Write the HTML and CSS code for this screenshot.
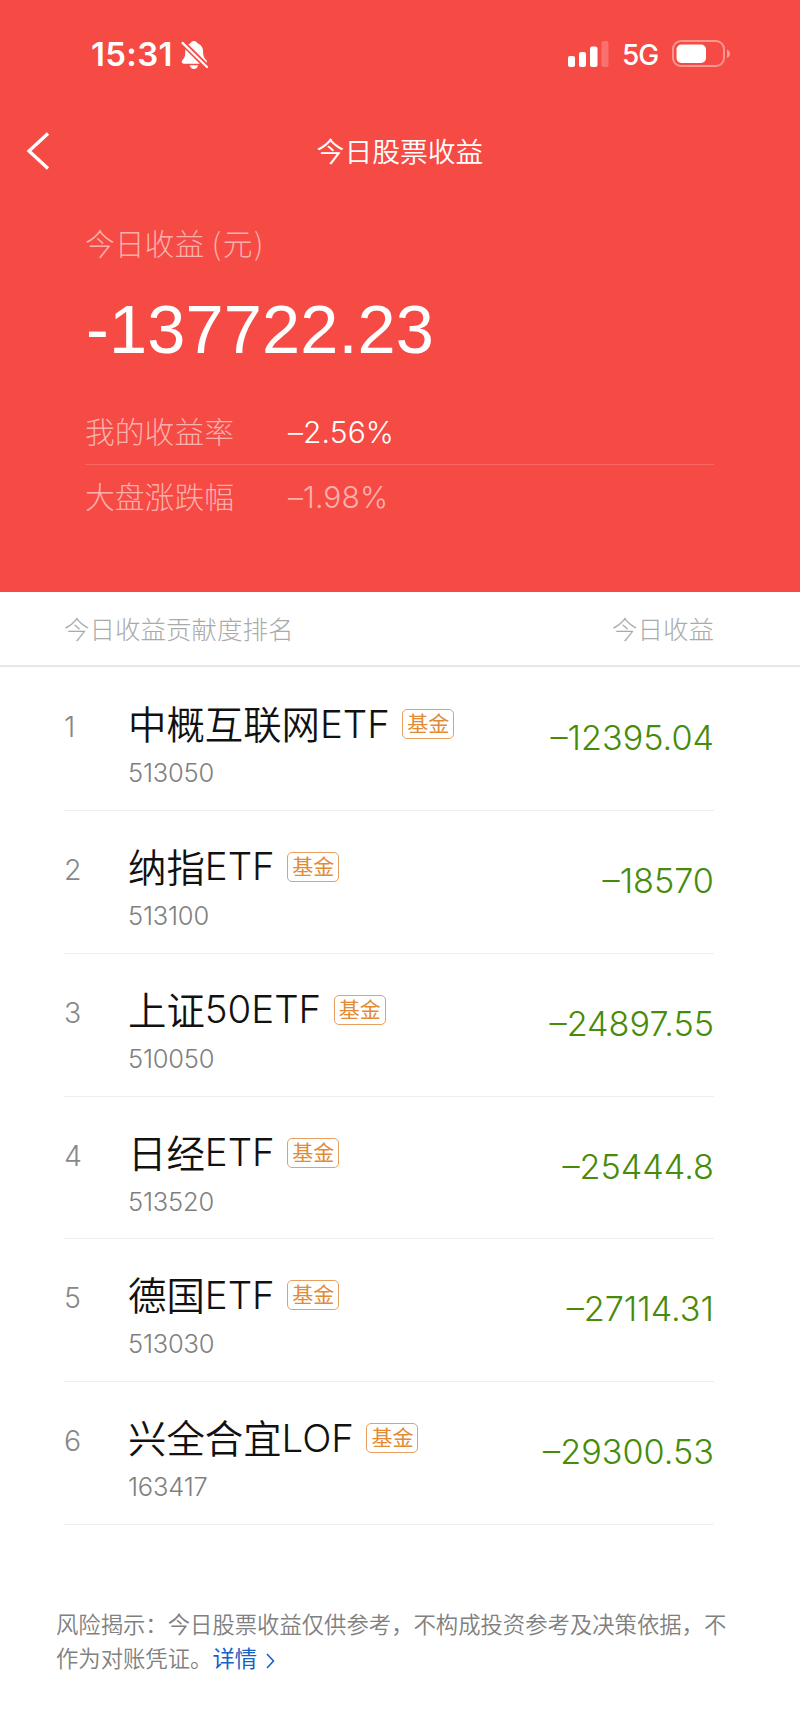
FILE: index.html
```html
<!DOCTYPE html>
<html lang="zh-CN">
<head>
<meta charset="utf-8">
<title>今日股票收益</title>
<link rel="stylesheet" href="styles.css">
</head>
<body>
<header class="hero">
  <div class="status">
    <span class="time">15:31</span>
    <svg class="bell" width="28" height="30" viewBox="0 0 28 30">
      <path fill="#fff" d="M13 1c1.900 0 3.100 1 3.500 2.300 3.600 1.300 5.600 4.300 5.600 8.200 0 4.500 1.100 6.400 3.500 9.100.8 1.300.1 3.100-1.700 3.100H2.700c-1.800 0-2.500-1.800-1.600-3.100 2.400-2.700 3.200-4.600 3.200-9.100 0-3.900 1.700-6.900 5.200-8.200C9.900 2 11.100 1 13 1zM8.700 25.200h8.400c-.5 2.300-2 3.700-4.200 3.700s-3.700-1.400-4.200-3.700z"/>
      <path stroke="#f64a44" stroke-width="5.600" d="M0 1l27 27"/>
      <path stroke="#fff" stroke-width="2.200" stroke-linecap="round" d="M1.500 2.900L26 27"/>
    </svg>
    <svg class="signal" width="41" height="26" viewBox="0 0 41 26" fill="#fff">
      <rect x="0" y="15" width="7" height="11" rx="2"/>
      <rect x="11" y="11" width="7" height="15" rx="2"/>
      <rect x="22" y="5.500" width="7.500" height="20.500" rx="2"/>
      <rect x="33.500" y="0" width="7" height="26" rx="2" opacity=".22"/>
    </svg>
    <span class="net">5G</span>
    <svg class="battery" width="60" height="28" viewBox="0 0 60 28">
      <rect x="1" y="1" width="51" height="25" rx="8" fill="none" stroke="#fff" stroke-width="2" opacity=".42"/>
      <rect x="4.500" y="4.500" width="29.500" height="18.500" rx="5" fill="#fff"/>
      <path d="M55 9.500c4 1.500 4 7 0 8.500z" fill="#fff" opacity=".45"/>
    </svg>
  </div>
  <nav class="nav">
    <svg class="back" width="24" height="38" viewBox="0 0 24 38"><path d="M22 1.500L3 19l19 17.500" fill="none" stroke="#fff" stroke-width="3.300"/></svg>
    <h1 class="title">今日股票收益</h1>
  </nav>
  <div class="label">今日收益 <span class="unit">(元)</span></div>
  <div class="total">-137722.23</div>
  <div class="rates">
    <div class="rate"><span class="label">我的收益率</span><span class="pct mine">–2.56%</span></div>
    <div class="rate"><span class="label">大盘涨跌幅</span><span class="pct">–1.98%</span></div>
  </div>
</header>
<main>
  <div class="thead"><span>今日收益贡献度排名</span><span>今日收益</span></div>
  <ul class="list">
    <li class="row"><span class="rank">1</span><div class="fund"><div class="name"><span class="cjk">中概互联网</span><span class="latin">ETF</span><span class="tag">基金</span></div><div class="code">513050</div></div><span class="value">–12395.04</span></li>
    <li class="row"><span class="rank">2</span><div class="fund"><div class="name"><span class="cjk">纳指</span><span class="latin">ETF</span><span class="tag">基金</span></div><div class="code">513100</div></div><span class="value">–18570</span></li>
    <li class="row"><span class="rank">3</span><div class="fund"><div class="name"><span class="cjk">上证</span><span class="latin">50ETF</span><span class="tag">基金</span></div><div class="code">510050</div></div><span class="value">–24897.55</span></li>
    <li class="row"><span class="rank">4</span><div class="fund"><div class="name"><span class="cjk">日经</span><span class="latin">ETF</span><span class="tag">基金</span></div><div class="code">513520</div></div><span class="value">–25444.8</span></li>
    <li class="row"><span class="rank">5</span><div class="fund"><div class="name"><span class="cjk">德国</span><span class="latin">ETF</span><span class="tag">基金</span></div><div class="code">513030</div></div><span class="value">–27114.31</span></li>
    <li class="row"><span class="rank">6</span><div class="fund"><div class="name"><span class="cjk">兴全合宜</span><span class="latin">LOF</span><span class="tag">基金</span></div><div class="code">163417</div></div><span class="value">–29300.53</span></li>
  </ul>
  <p class="risk">风险揭示：今日股票收益仅供参考，不构成投资参考及决策依据，不<br>作为对账凭证。<a class="more">详情<svg class="chev" width="9" height="16" viewBox="0 0 9 16"><path d="M1 1l6.500 7L1 15" fill="none" stroke="#1a5fc4" stroke-width="1.600"/></svg></a></p>
</main>
</body>
</html>
```

FILE: styles.css
```css
* { box-sizing: border-box; margin: 0; padding: 0; }
body {
  width: 800px;
  height: 1734px;
  background: #fff;
  font-family: Inter, "Noto Sans CJK SC", sans-serif;
  font-weight: 300;
  overflow: hidden;
}
.hero { height: 592px; background: #f64a44; color: #fff; }
.status { display: flex; height: 106px; padding: 34px 0 0 91px; align-items: flex-start; }
.time { width: 89px; font-size: 33px; line-height: 41px; font-weight: 600; letter-spacing: 0.300px; white-space: nowrap; }
.bell { margin: 6px 0 0 1px; }
.signal { margin: 7px 0 0 359px; }
.net { width: 49px; margin-left: 13px; font-size: 28px; line-height: 43px; font-weight: 500; letter-spacing: -1px; }
.battery { margin: 6px 0 0 1px; }
.nav { position: relative; display: flex; height: 90px; justify-content: center; align-items: center; }
.back { position: absolute; left: 26px; top: 26px; }
.title { margin-top: -2px; font-family: "Noto Sans CJK SC", sans-serif; font-size: 27.800px; font-weight: 350; line-height: 40px; }
.label { font-family: "Noto Sans CJK SC", sans-serif; font-size: 29.800px; line-height: 40px; font-weight: 300; color: #fbb0ad; white-space: nowrap; }
.hero > .label { margin: 26px 0 0 85px; }
.unit { margin-left: 1px; letter-spacing: 1.500px; }
.total { margin: 28px 0 0 86px; font-family: "Liberation Sans", Arial, sans-serif; font-size: 68.500px; font-weight: 400; line-height: 80px; letter-spacing: 0.150px; }
.rates { width: 629px; margin: 32px 0 0 85px; }
.rate { display: flex; height: 62px; padding-top: 8px; }
.rate + .rate { border-top: 1px solid #f96762; padding-top: 10px; }
.rate .label { width: 203px; }
.pct { font-size: 30px; line-height: 45px; letter-spacing: 0.100px; color: #fbb0ad; }
.pct.mine { color: #fff; }
.thead {
  display: flex; justify-content: space-between; align-items: center; height: 75px; padding: 0 86px 2px 64px;
  border-bottom: 2px solid #e7e7e7; font-size: 25.500px; color: #aaa;
}
.list { padding: 1px 86px 0 64px; list-style: none; }
.row { display: flex; height: 142.850px; border-bottom: 1px solid #eee; }
.rank { width: 64px; padding-top: 39px; font-size: 28.500px; line-height: 40px; color: #888; }
.fund { flex: 1; padding-top: 32px; }
.name { display: flex; align-items: center; height: 48px; font-size: 38.400px; color: #111; white-space: nowrap; }
.cjk { margin-top: -4px; font-family: "Noto Sans CJK SC", sans-serif; font-weight: 350; line-height: 48px; }
.latin { margin-top: -1px; font-weight: 350; }
.tag { margin-left: 12.500px; width: 52px; height: 30px; border: 1.500px solid #e8a060; border-radius: 5px; color: #e38a35; font-size: 21px; line-height: 27px; text-align: center; font-weight: 400; }
.code { margin-top: 5px; font-size: 25.500px; line-height: 40px; letter-spacing: -0.200px; color: #808080; }
.value { padding-top: 49px; font-size: 34.200px; line-height: 41px; color: #478b0b; }
.risk { padding: 82px 0 0 56px; font-family: "Noto Sans CJK SC", sans-serif; font-size: 22.350px; line-height: 33.500px; font-weight: 350; color: #808080; white-space: nowrap; }
.more { color: #1a5fc4; font-weight: 400; }
.chev { margin-left: 9px; vertical-align: -2px; }
```
